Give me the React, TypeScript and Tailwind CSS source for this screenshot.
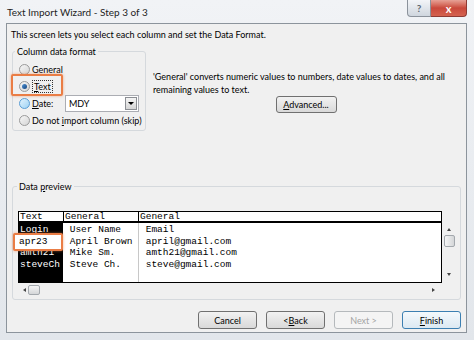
const UI = "font-['Lato',sans-serif]";

function Radio({ checked, hover }: { checked?: boolean; hover?: boolean }) {
  return (
    <span
      className={`flex h-[11px] w-[11px] shrink-0 items-center justify-center rounded-full border ${
        hover
          ? "border-[#5a9ed6] bg-linear-to-br from-[#e3f3fd] to-[#9dd2f4]"
          : "border-[#9a9a9a] bg-linear-to-br from-[#f6f6f6] to-[#d6d6d6]"
      }`}
    >
      {checked && <span className="h-[5px] w-[5px] rounded-full bg-linear-to-br from-[#4f93d6] to-[#16457e]" />}
    </span>
  );
}

function Button({ children, disabled, focus }: { children: React.ReactNode; disabled?: boolean; focus?: boolean }) {
  let cls = "border-[#707070] bg-linear-to-b from-[#f2f2f2] to-[#d9d9d9] text-black";
  if (disabled) cls = "border-[#b5b9bc] bg-[#f4f4f4] text-[#a3a3a3]";
  if (focus) cls = "border-[#3c7fb1] bg-linear-to-b from-[#f4f9fc] to-[#dce9f2] text-black";
  return (
    <div className={`flex h-[18px] w-[59px] items-center justify-center rounded-[3px] border ${cls}`}>
      {children}
    </div>
  );
}

const ROWS = [
  ["Login", " User Name", " Email"],
  ["apr23", " April Brown", " april@gmail.com"],
  ["amth21", " Mike Sm.", " amth21@gmail.com"],
  ["steveCh", " Steve Ch.", " steve@gmail.com"],
];

export default function App() {
  return (
    <div className={`relative h-[340px] w-[474px] overflow-hidden bg-linear-to-b from-[#f1f3f6] to-[#e2e6eb] ${UI} text-[9px] leading-[13px] text-black`}>
      {/* Title bar */}
      <div className="flex h-[23px] items-start justify-between pl-[7px] pr-[7px]">
        <span className="mt-[6px] text-[10px] leading-[13px] text-[#1e1e1e]">Text Import Wizard - Step 3 of 3</span>
        <div className="flex">
          <div className="flex h-[17px] w-[24px] items-center justify-center rounded-bl-[4px] border border-t-0 border-[#8b929b] bg-linear-to-b from-[#f3f5f8] to-[#cfd6de] text-[10px] font-bold text-[#5d6670]">
            ?
          </div>
          <div className="flex h-[17px] w-[36px] items-center justify-center rounded-br-[4px] border border-l-0 border-t-0 border-[#8e3a33] bg-linear-to-b from-[#e6a196] via-[#c9483b] to-[#d4624f] text-[11px] font-bold text-white">
            x
          </div>
        </div>
      </div>

      {/* Client area */}
      <div className="mx-[6px] mr-[7px] flex h-[310px] flex-col border border-[#8c949c] bg-[#f0f0f0]">
        <p className="pl-[4px] pt-[4px]">This screen lets you select each column and set the Data Format.</p>

        <div className="mt-[4px] flex">
          <fieldset className="ml-[5px] w-[134px] rounded-[3px] border border-[#d5d9dd] pb-[1px] pl-[6px]">
            <legend className="-ml-[4px] px-[2px]">Column data format</legend>
            <div className="relative mt-[3px] flex flex-col">
              <div className="flex h-[17px] items-center gap-[2px]">
                <Radio />
                <span>General</span>
              </div>
              <div className="flex h-[17px] items-center gap-[2px]">
                <Radio checked />
                <span className="border border-dotted border-[#333] px-[1px] leading-[11px]">
                  <u>T</u>ext
                </span>
              </div>
              <div className="flex h-[17px] items-center gap-[2px]">
                <Radio hover />
                <span className="w-[31px]">
                  <u>D</u>ate:
                </span>
                <div className="flex h-[17px] w-[74px] items-center border border-[#abadb3] bg-white">
                  <span className="flex-1 pl-[3px]">MDY</span>
                  <span className="mr-[1px] flex h-[13px] w-[12px] items-center justify-center border border-[#8c8f94] bg-linear-to-b from-[#f5f5f5] to-[#d5d5d5]">
                    <span className="h-0 w-0 border-x-[3px] border-t-[3px] border-x-transparent border-t-black" />
                  </span>
                </div>
              </div>
              <div className="flex h-[17px] items-center gap-[2px]">
                <Radio />
                <span className="whitespace-nowrap">
                  Do not <u>i</u>mport column (skip)
                </span>
              </div>
              {/* orange callout around "Text" */}
              <div className="absolute left-[-8px] top-[13px] h-[22px] w-[52px] rounded-[2px] border-[2.5px] border-[#ea7d45] shadow-[0_0_3px_rgba(234,125,69,0.6)]" />
            </div>
          </fieldset>

          <div className="ml-[7px] flex flex-1 flex-col pt-[25px]">
            <p className="w-[300px]">
              'General' converts numeric values to numbers, date values to dates, and all remaining values to text.
            </p>
            <div className="flex justify-center pr-[7px]">
              <div className="flex h-[17px] w-[61px] items-center justify-center rounded-[3px] border border-[#707070] bg-linear-to-b from-[#f2f2f2] to-[#d9d9d9]">
                <span>
                  <u>A</u>dvanced...
                </span>
              </div>
            </div>
          </div>
        </div>

        <fieldset className="ml-[5px] mr-[5px] mt-[49px] rounded-[3px] border border-[#d5d9dd] pb-[2px] pl-[5px] pt-[18px]">
          <legend className="-ml-[1px] px-[2px]">
            Data <u>p</u>review
          </legend>
          <div className="flex font-['Liberation_Mono',monospace] text-[9.5px] leading-[11.7px]">
            <div className="flex w-[424px] flex-col">
              <div className="flex h-[12px] border border-b-2 border-black bg-white leading-[10px]">
                <span className="w-[45px] border-r border-black pl-[1px]">Text</span>
                <span className="w-[75px] border-r border-black pl-[1px]">General</span>
                <span className="flex-1 pl-[1px]">General</span>
              </div>
              <div className="relative flex h-[60px] border-x border-b border-black bg-white">
                <div className="w-[44px] bg-black pt-[1px] text-white">
                  {ROWS.map((r) => (
                    <div key={r[0]} className="pl-[1px]">{r[0]}</div>
                  ))}
                </div>
                <div className="w-[75px] pt-[1px] whitespace-pre">
                  {ROWS.map((r) => (
                    <div key={r[0]} className="pl-[1px]">{r[1]}</div>
                  ))}
                </div>
                <div className="flex-1 border-l border-[#c8c8c8] pt-[1px] whitespace-pre">
                  {ROWS.map((r) => (
                    <div key={r[0]} className="pl-[1px]">{r[2]}</div>
                  ))}
                </div>
                {/* orange callout around "apr23" */}
                <div className="absolute left-[-6px] top-[10px] flex h-[18px] w-[50px] items-center rounded-[2px] border-[2.5px] border-[#ea7d45] bg-white pl-[4px] shadow-[0_0_3px_rgba(234,125,69,0.6)]">
                  apr23
                </div>
              </div>
              {/* horizontal scrollbar */}
              <div className="flex h-[14px] items-center justify-between px-[5px]">
                <div className="flex items-center gap-[2px]">
                  <span className="h-0 w-0 border-y-[2.5px] border-r-[3px] border-y-transparent border-r-[#444]" />
                  <span className="h-[10px] w-[12px] rounded-[2px] border border-[#a3a8ad] bg-linear-to-b from-[#f6f6f6] to-[#d4d6d8]" />
                </div>
                <span className="mr-[2px] h-0 w-0 border-y-[2.5px] border-l-[3px] border-y-transparent border-l-[#444]" />
              </div>
            </div>
            {/* vertical scrollbar */}
            <div className="flex w-[14px] flex-col items-center pt-[17px]">
              <span className="h-0 w-0 border-x-[2.5px] border-b-[3px] border-x-transparent border-b-[#444]" />
              <span className="ml-[1px] mt-[4px] h-[12px] w-[11px] rounded-[2px] border border-[#a3a8ad] bg-linear-to-r from-[#f6f6f6] to-[#d4d6d8]" />
              <span className="mt-[26px] h-0 w-0 border-x-[2.5px] border-t-[3px] border-x-transparent border-t-[#444]" />
            </div>
          </div>
        </fieldset>

        <div className="mt-[11px] flex justify-end gap-[9px] pr-[5px]">
          <Button>Cancel</Button>
          <Button>
            &lt; <u>B</u>ack
          </Button>
          <Button disabled>Next &gt;</Button>
          <Button focus>
            <u>F</u>inish
          </Button>
        </div>
      </div>
    </div>
  );
}
